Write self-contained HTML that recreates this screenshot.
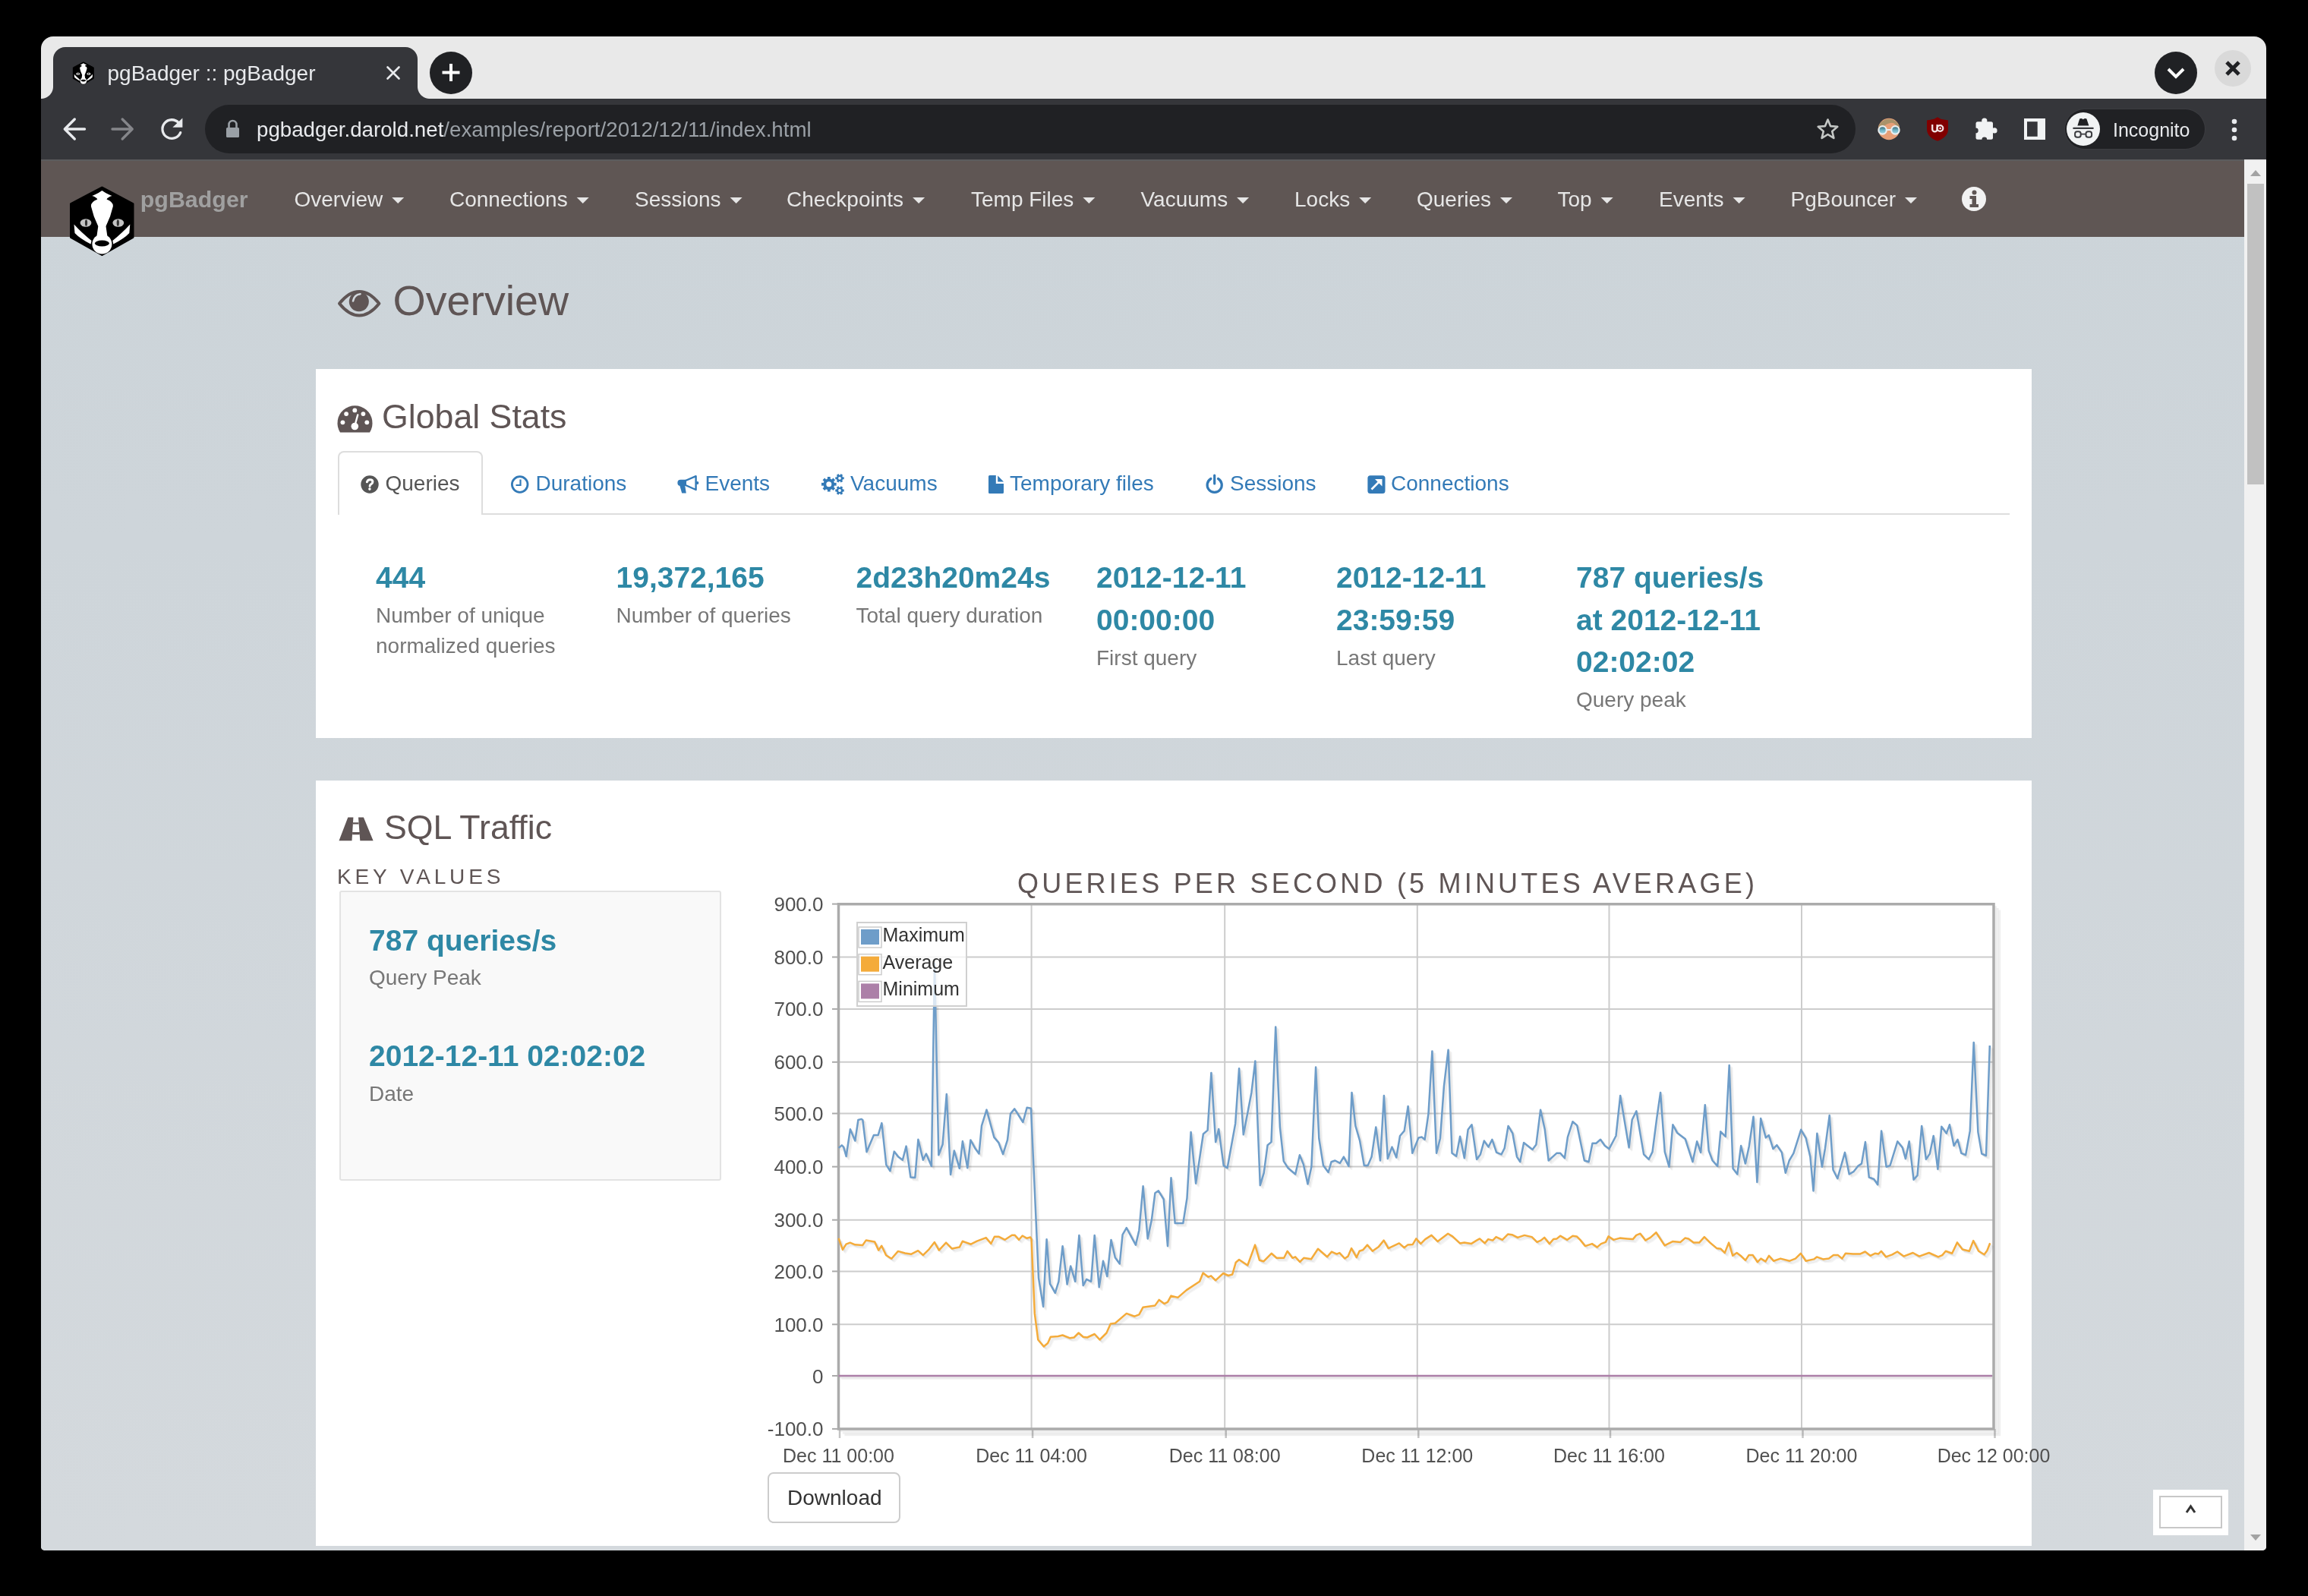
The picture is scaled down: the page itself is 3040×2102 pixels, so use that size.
<!DOCTYPE html>
<html><head><meta charset="utf-8"><title>pgBadger :: pgBadger</title>
<style>
html,body{margin:0;padding:0;width:3040px;height:2102px;overflow:hidden;background:#000;}
body{position:relative;will-change:transform;font-family:"Liberation Sans",sans-serif;}
.a{position:absolute;}
.t{position:absolute;white-space:nowrap;line-height:1;}
svg text{font-family:"Liberation Sans",sans-serif;}
</style></head><body>
<div class="a" id="win" style="left:54px;top:48px;width:2931px;height:1994px;border-radius:16px 16px 5px 5px;overflow:hidden;background:#e9e9e9"><div class="a" style="left:-54px;top:-48px;width:3040px;height:2102px">
<div class="a" style="left:54px;top:130px;width:2931px;height:80px;background:#35363a"></div>
<div class="a" style="left:70px;top:62px;width:480px;height:69px;background:#35363a;border-radius:16px 16px 0 0"></div>
<div class="a" style="left:54px;top:114px;width:16px;height:16px;background:radial-gradient(circle at 0 0,#e9e9e9 15.5px,#35363a 16.5px)"></div>
<div class="a" style="left:550px;top:114px;width:16px;height:16px;background:radial-gradient(circle at 100% 0,#e9e9e9 15.5px,#35363a 16.5px)"></div>
<div class="t" style="top:83px;font-size:28px;color:#e8eaed;left:141.5px;">pgBadger :: pgBadger</div>
<div class="a" style="left:270px;top:138px;width:2174px;height:64px;background:#202124;border-radius:32px"></div>
<div class="t" style="top:156.5px;font-size:27.7px;color:#e8eaed;left:338px;">pgbadger.darold.net<span style="color:#9aa0a6">/examples/report/2012/12/11/index.html</span></div>
<div class="a" style="left:2720px;top:144px;width:184px;height:52px;background:#202124;border-radius:26px;box-shadow:0 0 0 1px #3c3d41"></div>
<div class="a" style="left:2722px;top:148px;width:44px;height:44px;background:#f1f3f4;border-radius:50%"></div>
<div class="t" style="top:159px;font-size:25px;color:#e8eaed;left:2783px;">Incognito</div>
<div class="a" style="left:2838px;top:68px;width:56px;height:56px;background:#202124;border-radius:50%"></div>
<div class="a" style="left:2917px;top:66px;width:48px;height:48px;background:#d9d9d9;border-radius:50%"></div>
<div class="a" style="left:566px;top:68px;width:56px;height:56px;background:#202124;border-radius:50%"></div>
<div class="a" style="left:54px;top:210px;width:2902px;height:1832px;background:linear-gradient(180deg,#ccd4d9 0px,#ced5da 500px,#d4d9dd 1832px)"></div>
<div class="a" style="left:54px;top:210px;width:2902px;height:2px;background:#5c5c5e"></div>
<div class="a" style="left:54px;top:212px;width:2902px;height:100px;background:#5f5654"></div>
<div class="a" style="left:2956px;top:212px;width:29px;height:1830px;background:#f1f1f1"></div>
<div class="a" style="left:2960px;top:242px;width:22px;height:396px;background:#c1c1c1"></div>
<div class="t" style="top:247px;font-size:30.4px;color:#a0a0a0;font-weight:700;left:184.8px;">pgBadger</div>
<div class="t" style="top:249px;font-size:28px;color:#e6e6e6;left:387.5px;">Overview</div>
<div class="t" style="top:249px;font-size:28px;color:#e6e6e6;left:592px;">Connections</div>
<div class="t" style="top:249px;font-size:28px;color:#e6e6e6;left:836px;">Sessions</div>
<div class="t" style="top:249px;font-size:28px;color:#e6e6e6;left:1036px;">Checkpoints</div>
<div class="t" style="top:249px;font-size:28px;color:#e6e6e6;left:1279px;">Temp Files</div>
<div class="t" style="top:249px;font-size:28px;color:#e6e6e6;left:1502.5px;">Vacuums</div>
<div class="t" style="top:249px;font-size:28px;color:#e6e6e6;left:1705px;">Locks</div>
<div class="t" style="top:249px;font-size:28px;color:#e6e6e6;left:1866px;">Queries</div>
<div class="t" style="top:249px;font-size:28px;color:#e6e6e6;left:2051.5px;">Top</div>
<div class="t" style="top:249px;font-size:28px;color:#e6e6e6;left:2185px;">Events</div>
<div class="t" style="top:249px;font-size:28px;color:#e6e6e6;left:2358.5px;">PgBouncer</div>
<div class="t" style="top:369px;font-size:55.6px;color:#5f5555;left:517.5px;">Overview</div>
<div class="a" style="left:416px;top:486px;width:2260px;height:486px;background:#fff"></div>
<div class="t" style="top:527px;font-size:44.7px;color:#5f5555;left:503px;">Global Stats</div>
<div class="a" style="left:445px;top:676px;width:2202px;height:2px;background:#dddddd"></div>
<div class="a" style="left:445px;top:594px;width:191px;height:84px;background:#fff;border:2px solid #dddddd;border-bottom:none;border-radius:8px 8px 0 0;box-sizing:border-box"></div>
<div class="t" style="top:623px;font-size:28px;color:#555555;left:507.5px;">Queries</div>
<div class="t" style="top:623px;font-size:28px;color:#337ab7;left:705.5px;">Durations</div>
<div class="t" style="top:623px;font-size:28px;color:#337ab7;left:928.5px;">Events</div>
<div class="t" style="top:623px;font-size:28px;color:#337ab7;left:1120px;">Vacuums</div>
<div class="t" style="top:623px;font-size:28px;color:#337ab7;left:1330px;">Temporary files</div>
<div class="t" style="top:623px;font-size:28px;color:#337ab7;left:1620px;">Sessions</div>
<div class="t" style="top:623px;font-size:28px;color:#337ab7;left:1832px;">Connections</div>
<div class="t" style="top:741px;font-size:39px;color:#2e88a5;font-weight:700;left:495px;">444</div>
<div class="t" style="top:797.0px;font-size:28px;color:#777777;left:495px;">Number of unique</div>
<div class="t" style="top:837.0px;font-size:28px;color:#777777;left:495px;">normalized queries</div>
<div class="t" style="top:741px;font-size:39px;color:#2e88a5;font-weight:700;left:811.5px;">19,372,165</div>
<div class="t" style="top:797.0px;font-size:28px;color:#777777;left:811.5px;">Number of queries</div>
<div class="t" style="top:741px;font-size:39px;color:#2e88a5;font-weight:700;left:1127.5px;">2d23h20m24s</div>
<div class="t" style="top:797.0px;font-size:28px;color:#777777;left:1127.5px;">Total query duration</div>
<div class="t" style="top:741px;font-size:39px;color:#2e88a5;font-weight:700;left:1444px;">2012-12-11</div>
<div class="t" style="top:796.7px;font-size:39px;color:#2e88a5;font-weight:700;left:1444px;">00:00:00</div>
<div class="t" style="top:852.7px;font-size:28px;color:#777777;left:1444px;">First query</div>
<div class="t" style="top:741px;font-size:39px;color:#2e88a5;font-weight:700;left:1760px;">2012-12-11</div>
<div class="t" style="top:796.7px;font-size:39px;color:#2e88a5;font-weight:700;left:1760px;">23:59:59</div>
<div class="t" style="top:852.7px;font-size:28px;color:#777777;left:1760px;">Last query</div>
<div class="t" style="top:741px;font-size:39px;color:#2e88a5;font-weight:700;left:2076px;">787 queries/s</div>
<div class="t" style="top:796.7px;font-size:39px;color:#2e88a5;font-weight:700;left:2076px;">at 2012-12-11</div>
<div class="t" style="top:852.4000000000001px;font-size:39px;color:#2e88a5;font-weight:700;left:2076px;">02:02:02</div>
<div class="t" style="top:908.4px;font-size:28px;color:#777777;left:2076px;">Query peak</div>
<div class="a" style="left:416px;top:1028px;width:2260px;height:1008px;background:#fff"></div>
<div class="t" style="top:1068px;font-size:44.7px;color:#5f5555;left:506px;">SQL Traffic</div>
<div class="t" style="top:1141px;font-size:28px;color:#5f5555;letter-spacing:4.85px;left:444px;">KEY VALUES</div>
<div class="a" style="left:446.5px;top:1172.5px;width:503.0px;height:382.5px;background:#f9f9f9;border:2px solid #e3e3e3;box-sizing:border-box;border-radius:3px"></div>
<div class="t" style="top:1219px;font-size:39px;color:#2e88a5;font-weight:700;left:486px;">787 queries/s</div>
<div class="t" style="top:1274px;font-size:28px;color:#777777;left:486px;">Query Peak</div>
<div class="t" style="top:1371px;font-size:39px;color:#2e88a5;font-weight:700;left:486px;">2012-12-11 02:02:02</div>
<div class="t" style="top:1426.5px;font-size:28px;color:#777777;left:486px;">Date</div>
<div class="a" style="left:1011px;top:1939px;width:175px;height:67px;background:#fff;border:2px solid #cccccc;border-radius:8px;box-sizing:border-box"></div>
<div class="t" style="top:1959px;font-size:28px;color:#333333;left:1037px;">Download</div>
<div class="a" style="left:2836px;top:1962px;width:99px;height:60px;background:#fff"></div>
<div class="a" style="left:2844px;top:1970px;width:83px;height:43px;background:#fff;border:2px solid #c8c8c8;box-sizing:border-box"></div>
<svg class="a" style="left:0;top:0" width="3040" height="2102" viewBox="0 0 3040 2102">
<line x1="1096" y1="1881.90" x2="1104.5" y2="1881.90" stroke="#aaaaaa" stroke-width="2"/>
<line x1="1104.5" y1="1812.00" x2="2626" y2="1812.00" stroke="#cccccc" stroke-width="2"/>
<line x1="1096" y1="1812.00" x2="1104.5" y2="1812.00" stroke="#aaaaaa" stroke-width="2"/>
<line x1="1104.5" y1="1744.30" x2="2626" y2="1744.30" stroke="#cccccc" stroke-width="2"/>
<line x1="1096" y1="1744.30" x2="1104.5" y2="1744.30" stroke="#aaaaaa" stroke-width="2"/>
<line x1="1104.5" y1="1674.40" x2="2626" y2="1674.40" stroke="#cccccc" stroke-width="2"/>
<line x1="1096" y1="1674.40" x2="1104.5" y2="1674.40" stroke="#aaaaaa" stroke-width="2"/>
<line x1="1104.5" y1="1606.70" x2="2626" y2="1606.70" stroke="#cccccc" stroke-width="2"/>
<line x1="1096" y1="1606.70" x2="1104.5" y2="1606.70" stroke="#aaaaaa" stroke-width="2"/>
<line x1="1104.5" y1="1536.60" x2="2626" y2="1536.60" stroke="#cccccc" stroke-width="2"/>
<line x1="1096" y1="1536.60" x2="1104.5" y2="1536.60" stroke="#aaaaaa" stroke-width="2"/>
<line x1="1104.5" y1="1466.50" x2="2626" y2="1466.50" stroke="#cccccc" stroke-width="2"/>
<line x1="1096" y1="1466.50" x2="1104.5" y2="1466.50" stroke="#aaaaaa" stroke-width="2"/>
<line x1="1104.5" y1="1398.80" x2="2626" y2="1398.80" stroke="#cccccc" stroke-width="2"/>
<line x1="1096" y1="1398.80" x2="1104.5" y2="1398.80" stroke="#aaaaaa" stroke-width="2"/>
<line x1="1104.5" y1="1328.90" x2="2626" y2="1328.90" stroke="#cccccc" stroke-width="2"/>
<line x1="1096" y1="1328.90" x2="1104.5" y2="1328.90" stroke="#aaaaaa" stroke-width="2"/>
<line x1="1104.5" y1="1260.50" x2="2626" y2="1260.50" stroke="#cccccc" stroke-width="2"/>
<line x1="1096" y1="1260.50" x2="1104.5" y2="1260.50" stroke="#aaaaaa" stroke-width="2"/>
<line x1="1096" y1="1190.60" x2="1104.5" y2="1190.60" stroke="#aaaaaa" stroke-width="2"/>
<line x1="1358.60" y1="1190.75" x2="1358.60" y2="1882" stroke="#cccccc" stroke-width="2"/>
<line x1="1613.20" y1="1190.75" x2="1613.20" y2="1882" stroke="#cccccc" stroke-width="2"/>
<line x1="1866.80" y1="1190.75" x2="1866.80" y2="1882" stroke="#cccccc" stroke-width="2"/>
<line x1="2119.50" y1="1190.75" x2="2119.50" y2="1882" stroke="#cccccc" stroke-width="2"/>
<line x1="2373.00" y1="1190.75" x2="2373.00" y2="1882" stroke="#cccccc" stroke-width="2"/>
<line x1="1106.00" y1="1882" x2="1106.00" y2="1894" stroke="#c4c4c4" stroke-width="2.5"/>
<line x1="1360.10" y1="1882" x2="1360.10" y2="1894" stroke="#c4c4c4" stroke-width="2.5"/>
<line x1="1614.70" y1="1882" x2="1614.70" y2="1894" stroke="#c4c4c4" stroke-width="2.5"/>
<line x1="1868.30" y1="1882" x2="1868.30" y2="1894" stroke="#c4c4c4" stroke-width="2.5"/>
<line x1="2121.00" y1="1882" x2="2121.00" y2="1894" stroke="#c4c4c4" stroke-width="2.5"/>
<line x1="2374.50" y1="1882" x2="2374.50" y2="1894" stroke="#c4c4c4" stroke-width="2.5"/>
<line x1="2627.50" y1="1882" x2="2627.50" y2="1894" stroke="#c4c4c4" stroke-width="2.5"/>
<path d="M2628.6 1193.35 V1884.6 H1107.1" fill="none" stroke="rgba(0,0,0,0.06)" stroke-width="3"/>
<path d="M2631.2 1195.95 V1887.2 H1109.7" fill="none" stroke="rgba(0,0,0,0.06)" stroke-width="3"/>
<path d="M2633.8 1198.55 V1889.8 H1112.3" fill="none" stroke="rgba(0,0,0,0.06)" stroke-width="3"/>
<rect x="1104.5" y="1190.75" width="1521.5" height="691.25" fill="none" stroke="#ababab" stroke-width="3.5"/>
<path d="M1105.9 1513.1 L1110.0 1509.6 L1112.4 1512.0 L1115.9 1524.3 L1121.1 1488.6 L1127.6 1503.8 L1131.7 1476.3 L1135.8 1475.1 L1137.5 1476.3 L1142.8 1518.4 L1152.1 1496.2 L1158.0 1496.2 L1162.7 1480.4 L1168.5 1535.4 L1173.8 1543.6 L1179.0 1517.8 L1184.3 1524.8 L1190.2 1528.9 L1194.8 1510.8 L1200.7 1551.7 L1206.5 1552.3 L1210.6 1502.0 L1217.1 1528.9 L1221.2 1520.7 L1228.2 1537.1 L1232.2 1270.2 L1237.5 1522.5 L1242.8 1508.5 L1248.1 1442.4 L1253.3 1548.2 L1258.0 1516.7 L1265.0 1540.0 L1269.1 1504.4 L1275.6 1539.5 L1279.7 1502.6 L1286.1 1514.3 L1290.8 1520.7 L1294.3 1483.9 L1300.7 1462.8 L1310.7 1499.1 L1316.5 1506.1 L1322.4 1521.3 L1328.2 1502.6 L1332.3 1468.1 L1337.6 1461.7 L1348.7 1479.2 L1353.9 1459.9 L1359.2 1461.1 L1369.3 1684.6 L1375.3 1722.2 L1379.8 1633.4 L1384.3 1692.1 L1391.1 1704.1 L1395.6 1689.1 L1400.9 1642.5 L1406.9 1692.8 L1411.4 1668.8 L1417.4 1689.1 L1422.7 1628.2 L1427.9 1694.3 L1432.5 1686.1 L1438.5 1689.1 L1443.0 1628.2 L1449.0 1696.6 L1454.3 1662.0 L1459.5 1682.3 L1464.8 1634.2 L1470.0 1657.5 L1476.1 1665.8 L1479.8 1627.4 L1485.1 1618.4 L1497.1 1640.9 L1501.6 1621.4 L1506.9 1563.5 L1512.9 1632.7 L1518.2 1607.9 L1522.7 1572.5 L1527.2 1569.5 L1534.0 1580.8 L1539.2 1642.5 L1543.7 1552.6 L1549.0 1612.4 L1559.5 1612.4 L1564.8 1579.3 L1569.8 1492.3 L1576.3 1559.9 L1586.1 1494.8 L1591.8 1489.9 L1596.7 1414.1 L1602.4 1505.3 L1606.5 1488.2 L1613.0 1536.3 L1617.9 1539.6 L1628.5 1480.9 L1633.4 1408.4 L1639.1 1495.6 L1649.6 1440.2 L1654.5 1398.6 L1661.1 1562.4 L1665.9 1546.1 L1670.8 1509.4 L1675.7 1505.3 L1681.4 1353.8 L1687.1 1485.8 L1692.0 1530.6 L1697.7 1539.6 L1707.5 1547.7 L1713.2 1522.5 L1718.1 1534.7 L1723.8 1560.7 L1728.7 1537.9 L1734.4 1406.8 L1738.6 1500.5 L1744.3 1536.3 L1750.8 1545.3 L1754.9 1531.4 L1759.8 1529.8 L1766.3 1533.0 L1771.2 1524.9 L1777.7 1537.1 L1781.8 1440.2 L1786.6 1484.2 L1792.3 1503.7 L1798.0 1536.3 L1802.9 1536.3 L1807.8 1524.9 L1813.5 1485.8 L1819.2 1529.8 L1824.1 1444.3 L1829.0 1527.3 L1834.7 1511.9 L1840.4 1525.7 L1845.3 1497.2 L1851.0 1490.7 L1855.9 1458.1 L1861.6 1520.0 L1869.7 1499.6 L1873.8 1498.8 L1877.9 1502.1 L1882.8 1467.9 L1887.7 1385.6 L1893.4 1520.0 L1898.2 1500.5 L1903.1 1432.0 L1908.8 1384.0 L1913.7 1520.0 L1919.4 1524.1 L1924.3 1498.0 L1930.0 1526.5 L1934.9 1489.1 L1939.8 1482.5 L1946.3 1528.2 L1951.2 1521.6 L1956.1 1503.7 L1961.8 1511.9 L1966.7 1502.1 L1972.4 1519.2 L1978.9 1521.6 L1983.0 1513.5 L1987.8 1484.2 L1993.6 1493.9 L1999.3 1524.9 L2003.5 1531.4 L2008.4 1506.2 L2019.8 1515.1 L2024.6 1508.6 L2030.4 1463.0 L2036.1 1489.1 L2040.9 1529.8 L2051.5 1520.0 L2056.4 1520.0 L2062.1 1526.5 L2066.2 1498.8 L2072.7 1478.5 L2078.4 1483.4 L2088.2 1529.8 L2093.9 1531.4 L2098.8 1507.0 L2103.7 1507.0 L2109.4 1502.1 L2115.1 1510.2 L2120.8 1514.3 L2129.7 1497.2 L2135.4 1444.3 L2146.8 1512.7 L2150.9 1476.0 L2156.6 1464.6 L2166.4 1521.6 L2172.9 1528.2 L2177.8 1518.4 L2183.5 1474.4 L2188.4 1440.2 L2194.1 1518.4 L2199.8 1537.9 L2204.7 1482.5 L2210.4 1493.1 L2221.0 1501.3 L2230.7 1531.4 L2236.4 1504.5 L2241.3 1519.2 L2247.0 1456.5 L2251.9 1516.8 L2256.8 1529.8 L2263.5 1537.1 L2267.5 1491.5 L2274.1 1498.0 L2278.9 1404.3 L2283.8 1540.4 L2289.5 1547.7 L2294.4 1510.2 L2300.1 1533.9 L2305.0 1511.1 L2310.7 1472.0 L2315.6 1558.3 L2320.5 1474.4 L2327.0 1499.6 L2331.1 1496.4 L2336.8 1514.3 L2341.7 1509.4 L2348.2 1519.2 L2353.1 1546.1 L2358.0 1529.8 L2363.7 1520.0 L2373.4 1489.1 L2380.0 1500.5 L2385.7 1524.9 L2389.7 1569.7 L2394.6 1493.9 L2401.1 1537.9 L2405.2 1513.5 L2410.9 1470.3 L2415.8 1542.0 L2421.5 1553.4 L2431.3 1519.2 L2437.0 1547.7 L2442.7 1544.4 L2448.4 1537.1 L2453.3 1533.9 L2458.2 1505.3 L2463.0 1551.8 L2469.6 1554.2 L2474.4 1561.6 L2479.3 1490.7 L2485.9 1537.9 L2490.7 1536.3 L2500.5 1504.5 L2507.0 1512.7 L2511.1 1527.3 L2516.0 1504.5 L2521.9 1555.0 L2526.8 1549.3 L2532.5 1484.2 L2538.2 1528.2 L2543.1 1520.8 L2548.0 1497.2 L2553.7 1541.2 L2558.6 1485.0 L2565.1 1493.9 L2569.1 1482.5 L2574.8 1510.2 L2579.7 1502.1 L2584.6 1520.0 L2590.3 1522.5 L2596.0 1490.7 L2600.9 1374.2 L2606.6 1492.3 L2611.5 1520.8 L2617.2 1523.3 L2622.1 1378.3" fill="none" stroke="rgba(0,0,0,0.045)" stroke-width="2.5" stroke-linejoin="round"/>
<path d="M1107.2 1514.4 L1111.3 1510.9 L1113.6 1513.2 L1117.1 1525.5 L1122.4 1489.8 L1128.8 1505.0 L1132.9 1477.5 L1137.0 1476.4 L1138.8 1477.5 L1144.0 1519.7 L1153.4 1497.4 L1159.2 1497.4 L1163.9 1481.6 L1169.8 1536.6 L1175.0 1544.8 L1180.3 1519.1 L1185.6 1526.1 L1191.4 1530.2 L1196.1 1512.1 L1201.9 1553.0 L1207.8 1553.6 L1211.9 1503.3 L1218.3 1530.2 L1222.4 1522.0 L1229.4 1538.4 L1233.5 1271.5 L1238.8 1523.7 L1244.1 1509.7 L1249.3 1443.6 L1254.6 1549.5 L1259.3 1517.9 L1266.3 1541.3 L1270.4 1505.6 L1276.8 1540.7 L1280.9 1503.9 L1287.3 1515.6 L1292.0 1522.0 L1295.5 1485.1 L1302.0 1464.1 L1311.9 1500.4 L1317.8 1507.4 L1323.6 1522.6 L1329.5 1503.9 L1333.5 1469.4 L1338.8 1462.9 L1349.9 1480.5 L1355.2 1461.2 L1360.5 1462.3 L1370.5 1685.8 L1376.6 1723.4 L1381.1 1634.7 L1385.6 1693.3 L1392.3 1705.4 L1396.9 1690.3 L1402.1 1643.7 L1408.1 1694.1 L1412.7 1670.0 L1418.7 1690.3 L1423.9 1629.4 L1429.2 1695.6 L1433.7 1687.3 L1439.7 1690.3 L1444.2 1629.4 L1450.2 1697.8 L1455.5 1663.3 L1460.8 1683.6 L1466.0 1635.4 L1471.3 1658.7 L1477.3 1667.0 L1481.1 1628.7 L1486.3 1619.6 L1498.4 1642.2 L1502.9 1622.7 L1508.1 1564.8 L1514.2 1633.9 L1519.4 1609.1 L1523.9 1573.8 L1528.4 1570.8 L1535.2 1582.0 L1540.5 1643.7 L1545.0 1553.8 L1550.2 1613.6 L1560.8 1613.6 L1566.0 1580.5 L1571.1 1493.6 L1577.6 1561.2 L1587.4 1496.0 L1593.1 1491.1 L1597.9 1415.4 L1603.7 1506.6 L1607.7 1489.5 L1614.2 1537.6 L1619.1 1540.8 L1629.7 1482.2 L1634.6 1409.7 L1640.3 1496.8 L1650.9 1441.4 L1655.8 1399.9 L1662.3 1563.6 L1667.2 1547.3 L1672.1 1510.7 L1677.0 1506.6 L1682.7 1355.1 L1688.4 1487.0 L1693.3 1531.9 L1699.0 1540.8 L1708.7 1549.0 L1714.4 1523.7 L1719.3 1535.9 L1725.0 1562.0 L1729.9 1539.2 L1735.6 1408.0 L1739.8 1501.7 L1745.5 1537.6 L1752.1 1546.5 L1756.1 1532.7 L1761.0 1531.0 L1767.5 1534.3 L1772.4 1526.1 L1778.9 1538.4 L1783.0 1441.4 L1787.9 1485.4 L1793.6 1505.0 L1799.3 1537.6 L1804.2 1537.6 L1809.1 1526.1 L1814.8 1487.0 L1820.5 1531.0 L1825.4 1445.5 L1830.3 1528.6 L1836.0 1513.1 L1841.7 1527.0 L1846.5 1498.5 L1852.2 1491.9 L1857.1 1459.4 L1862.8 1521.3 L1871.0 1500.9 L1875.1 1500.1 L1879.1 1503.3 L1884.0 1469.1 L1888.9 1386.9 L1894.6 1521.3 L1899.5 1501.7 L1904.4 1433.3 L1910.1 1385.2 L1915.0 1521.3 L1920.7 1525.3 L1925.6 1499.3 L1931.3 1527.8 L1936.1 1490.3 L1941.0 1483.8 L1947.6 1529.4 L1952.4 1522.9 L1957.3 1505.0 L1963.0 1513.1 L1967.9 1503.3 L1973.6 1520.4 L1980.1 1522.9 L1984.2 1514.7 L1989.1 1485.4 L1994.8 1495.2 L2000.5 1526.1 L2004.7 1532.7 L2009.6 1507.4 L2021.0 1516.4 L2025.9 1509.9 L2031.6 1464.2 L2037.3 1490.3 L2042.2 1531.0 L2052.8 1521.3 L2057.7 1521.3 L2063.4 1527.8 L2067.4 1500.1 L2074.0 1479.7 L2079.7 1484.6 L2089.4 1531.0 L2095.1 1532.7 L2100.0 1508.2 L2104.9 1508.2 L2110.6 1503.3 L2116.3 1511.5 L2122.0 1515.6 L2131.0 1498.5 L2136.7 1445.5 L2148.1 1513.9 L2152.2 1477.3 L2157.9 1465.9 L2167.6 1522.9 L2174.2 1529.4 L2179.0 1519.6 L2184.7 1475.6 L2189.6 1441.4 L2195.3 1519.6 L2201.0 1539.2 L2205.9 1483.8 L2211.6 1494.4 L2222.2 1502.5 L2232.0 1532.7 L2237.7 1505.8 L2242.6 1520.4 L2248.3 1457.7 L2253.2 1518.0 L2258.1 1531.0 L2264.7 1538.4 L2268.8 1492.8 L2275.3 1499.3 L2280.2 1405.6 L2285.1 1541.6 L2290.8 1549.0 L2295.7 1511.5 L2301.4 1535.1 L2306.3 1512.3 L2312.0 1473.2 L2316.9 1559.5 L2321.7 1475.6 L2328.3 1500.9 L2332.3 1497.6 L2338.0 1515.6 L2342.9 1510.7 L2349.4 1520.4 L2354.3 1547.3 L2359.2 1531.0 L2364.9 1521.3 L2374.7 1490.3 L2381.2 1501.7 L2386.9 1526.1 L2391.0 1571.0 L2395.9 1495.2 L2402.4 1539.2 L2406.5 1514.7 L2412.2 1471.6 L2417.0 1543.3 L2422.8 1554.7 L2432.5 1520.4 L2438.2 1549.0 L2443.9 1545.7 L2449.6 1538.4 L2454.5 1535.1 L2459.4 1506.6 L2464.3 1553.0 L2470.8 1555.5 L2475.7 1562.8 L2480.6 1491.9 L2487.1 1539.2 L2492.0 1537.6 L2501.8 1505.8 L2508.3 1513.9 L2512.4 1528.6 L2517.2 1505.8 L2523.1 1556.3 L2528.0 1550.6 L2533.7 1485.4 L2539.4 1529.4 L2544.3 1522.1 L2549.2 1498.5 L2554.9 1542.4 L2559.8 1486.2 L2566.3 1495.2 L2570.4 1483.8 L2576.1 1511.5 L2581.0 1503.3 L2585.9 1521.3 L2591.6 1523.7 L2597.3 1491.9 L2602.2 1375.4 L2607.9 1493.6 L2612.8 1522.1 L2618.5 1524.5 L2623.3 1379.5" fill="none" stroke="rgba(0,0,0,0.045)" stroke-width="2.5" stroke-linejoin="round"/>
<path d="M1108.4 1515.6 L1112.5 1512.1 L1114.9 1514.5 L1118.4 1526.8 L1123.6 1491.1 L1130.1 1506.3 L1134.2 1478.8 L1138.3 1477.6 L1140.0 1478.8 L1145.3 1520.9 L1154.6 1498.7 L1160.5 1498.7 L1165.2 1482.9 L1171.0 1537.9 L1176.3 1546.1 L1181.5 1520.3 L1186.8 1527.3 L1192.7 1531.4 L1197.3 1513.3 L1203.2 1554.2 L1209.0 1554.8 L1213.1 1504.5 L1219.6 1531.4 L1223.7 1523.2 L1230.7 1539.6 L1234.8 1272.8 L1240.0 1525.0 L1245.3 1511.0 L1250.6 1444.9 L1255.8 1550.7 L1260.5 1519.2 L1267.5 1542.5 L1271.6 1506.9 L1278.1 1542.0 L1282.2 1505.1 L1288.6 1516.8 L1293.3 1523.2 L1296.8 1486.4 L1303.2 1465.3 L1313.2 1501.6 L1319.0 1508.6 L1324.9 1523.8 L1330.7 1505.1 L1334.8 1470.6 L1340.1 1464.2 L1351.2 1481.7 L1356.4 1462.4 L1361.7 1463.6 L1371.8 1687.1 L1377.8 1724.7 L1382.3 1635.9 L1386.8 1694.6 L1393.6 1706.6 L1398.1 1691.6 L1403.4 1645.0 L1409.4 1695.3 L1413.9 1671.3 L1419.9 1691.6 L1425.2 1630.7 L1430.4 1696.8 L1435.0 1688.6 L1441.0 1691.6 L1445.5 1630.7 L1451.5 1699.1 L1456.8 1664.5 L1462.0 1684.8 L1467.3 1636.7 L1472.5 1660.0 L1478.6 1668.3 L1482.3 1629.9 L1487.6 1620.9 L1499.6 1643.4 L1504.1 1623.9 L1509.4 1566.0 L1515.4 1635.2 L1520.7 1610.4 L1525.2 1575.0 L1529.7 1572.0 L1536.5 1583.3 L1541.7 1645.0 L1546.2 1555.1 L1551.5 1614.9 L1562.0 1614.9 L1567.3 1581.8 L1572.3 1494.8 L1578.8 1562.4 L1588.6 1497.3 L1594.3 1492.4 L1599.2 1416.6 L1604.9 1507.8 L1609.0 1490.7 L1615.5 1538.8 L1620.4 1542.1 L1631.0 1483.4 L1635.9 1410.9 L1641.6 1498.1 L1652.1 1442.7 L1657.0 1401.1 L1663.6 1564.9 L1668.4 1548.6 L1673.3 1511.9 L1678.2 1507.8 L1683.9 1356.3 L1689.6 1488.3 L1694.5 1533.1 L1700.2 1542.1 L1710.0 1550.2 L1715.7 1525.0 L1720.6 1537.2 L1726.3 1563.2 L1731.2 1540.4 L1736.9 1409.3 L1741.1 1503.0 L1746.8 1538.8 L1753.3 1547.8 L1757.4 1533.9 L1762.3 1532.3 L1768.8 1535.5 L1773.7 1527.4 L1780.2 1539.6 L1784.3 1442.7 L1789.1 1486.7 L1794.8 1506.2 L1800.5 1538.8 L1805.4 1538.8 L1810.3 1527.4 L1816.0 1488.3 L1821.7 1532.3 L1826.6 1446.8 L1831.5 1529.8 L1837.2 1514.4 L1842.9 1528.2 L1847.8 1499.7 L1853.5 1493.2 L1858.4 1460.6 L1864.1 1522.5 L1872.2 1502.1 L1876.3 1501.3 L1880.4 1504.6 L1885.3 1470.4 L1890.2 1388.1 L1895.9 1522.5 L1900.7 1503.0 L1905.6 1434.5 L1911.3 1386.5 L1916.2 1522.5 L1921.9 1526.6 L1926.8 1500.5 L1932.5 1529.0 L1937.4 1491.6 L1942.3 1485.0 L1948.8 1530.7 L1953.7 1524.1 L1958.6 1506.2 L1964.3 1514.4 L1969.2 1504.6 L1974.9 1521.7 L1981.4 1524.1 L1985.5 1516.0 L1990.3 1486.7 L1996.1 1496.4 L2001.8 1527.4 L2006.0 1533.9 L2010.9 1508.7 L2022.3 1517.6 L2027.1 1511.1 L2032.9 1465.5 L2038.6 1491.6 L2043.4 1532.3 L2054.0 1522.5 L2058.9 1522.5 L2064.6 1529.0 L2068.7 1501.3 L2075.2 1481.0 L2080.9 1485.9 L2090.7 1532.3 L2096.4 1533.9 L2101.3 1509.5 L2106.2 1509.5 L2111.9 1504.6 L2117.6 1512.7 L2123.3 1516.8 L2132.2 1499.7 L2137.9 1446.8 L2149.3 1515.2 L2153.4 1478.5 L2159.1 1467.1 L2168.9 1524.1 L2175.4 1530.7 L2180.3 1520.9 L2186.0 1476.9 L2190.9 1442.7 L2196.6 1520.9 L2202.3 1540.4 L2207.2 1485.0 L2212.9 1495.6 L2223.5 1503.8 L2233.2 1533.9 L2238.9 1507.0 L2243.8 1521.7 L2249.5 1459.0 L2254.4 1519.3 L2259.3 1532.3 L2266.0 1539.6 L2270.0 1494.0 L2276.6 1500.5 L2281.4 1406.8 L2286.3 1542.9 L2292.0 1550.2 L2296.9 1512.7 L2302.6 1536.4 L2307.5 1513.6 L2313.2 1474.5 L2318.1 1560.8 L2323.0 1476.9 L2329.5 1502.1 L2333.6 1498.9 L2339.3 1516.8 L2344.2 1511.9 L2350.7 1521.7 L2355.6 1548.6 L2360.5 1532.3 L2366.2 1522.5 L2375.9 1491.6 L2382.5 1503.0 L2388.2 1527.4 L2392.2 1572.2 L2397.1 1496.4 L2403.6 1540.4 L2407.7 1516.0 L2413.4 1472.8 L2418.3 1544.5 L2424.0 1555.9 L2433.8 1521.7 L2439.5 1550.2 L2445.2 1546.9 L2450.9 1539.6 L2455.8 1536.4 L2460.7 1507.8 L2465.5 1554.3 L2472.1 1556.7 L2476.9 1564.1 L2481.8 1493.2 L2488.4 1540.4 L2493.2 1538.8 L2503.0 1507.0 L2509.5 1515.2 L2513.6 1529.8 L2518.5 1507.0 L2524.4 1557.5 L2529.3 1551.8 L2535.0 1486.7 L2540.7 1530.7 L2545.6 1523.3 L2550.5 1499.7 L2556.2 1543.7 L2561.1 1487.5 L2567.6 1496.4 L2571.6 1485.0 L2577.3 1512.7 L2582.2 1504.6 L2587.1 1522.5 L2592.8 1525.0 L2598.5 1493.2 L2603.4 1376.7 L2609.1 1494.8 L2614.0 1523.3 L2619.7 1525.8 L2624.6 1380.8" fill="none" stroke="rgba(0,0,0,0.045)" stroke-width="2.5" stroke-linejoin="round"/>
<path d="M1104.7 1511.9 L1108.8 1508.4 L1111.1 1510.7 L1114.6 1523.0 L1119.9 1487.3 L1126.3 1502.5 L1130.4 1475.0 L1134.5 1473.9 L1136.3 1475.0 L1141.5 1517.2 L1150.9 1494.9 L1156.7 1494.9 L1161.4 1479.1 L1167.3 1534.1 L1172.5 1542.3 L1177.8 1516.6 L1183.1 1523.6 L1188.9 1527.7 L1193.6 1509.6 L1199.4 1550.5 L1205.3 1551.1 L1209.4 1500.8 L1215.8 1527.7 L1219.9 1519.5 L1226.9 1535.9 L1231.0 1269.0 L1236.3 1521.2 L1241.6 1507.2 L1246.8 1441.1 L1252.1 1547.0 L1256.8 1515.4 L1263.8 1538.8 L1267.9 1503.1 L1274.3 1538.2 L1278.4 1501.4 L1284.8 1513.1 L1289.5 1519.5 L1293.0 1482.6 L1299.5 1461.6 L1309.4 1497.9 L1315.3 1504.9 L1321.1 1520.1 L1327.0 1501.4 L1331.0 1466.9 L1336.3 1460.4 L1347.4 1478.0 L1352.7 1458.7 L1358.0 1459.8 L1368.0 1683.3 L1374.1 1720.9 L1378.6 1632.2 L1383.1 1690.8 L1389.8 1702.9 L1394.4 1687.8 L1399.6 1641.2 L1405.6 1691.6 L1410.2 1667.5 L1416.2 1687.8 L1421.4 1626.9 L1426.7 1693.1 L1431.2 1684.8 L1437.2 1687.8 L1441.7 1626.9 L1447.7 1695.3 L1453.0 1660.8 L1458.3 1681.1 L1463.5 1632.9 L1468.8 1656.2 L1474.8 1664.5 L1478.6 1626.2 L1483.8 1617.1 L1495.9 1639.7 L1500.4 1620.2 L1505.6 1562.3 L1511.7 1631.4 L1516.9 1606.6 L1521.4 1571.3 L1525.9 1568.3 L1532.7 1579.5 L1538.0 1641.2 L1542.5 1551.3 L1547.7 1611.1 L1558.3 1611.1 L1563.5 1578.0 L1568.6 1491.1 L1575.1 1558.7 L1584.9 1493.5 L1590.6 1488.6 L1595.4 1412.9 L1601.2 1504.1 L1605.2 1487.0 L1611.7 1535.1 L1616.6 1538.3 L1627.2 1479.7 L1632.1 1407.2 L1637.8 1494.3 L1648.4 1438.9 L1653.3 1397.4 L1659.8 1561.1 L1664.7 1544.8 L1669.6 1508.2 L1674.5 1504.1 L1680.2 1352.6 L1685.9 1484.5 L1690.8 1529.4 L1696.5 1538.3 L1706.2 1546.5 L1711.9 1521.2 L1716.8 1533.4 L1722.5 1559.5 L1727.4 1536.7 L1733.1 1405.5 L1737.3 1499.2 L1743.0 1535.1 L1749.6 1544.0 L1753.6 1530.2 L1758.5 1528.5 L1765.0 1531.8 L1769.9 1523.6 L1776.4 1535.9 L1780.5 1438.9 L1785.4 1482.9 L1791.1 1502.5 L1796.8 1535.1 L1801.7 1535.1 L1806.6 1523.6 L1812.3 1484.5 L1818.0 1528.5 L1822.9 1443.0 L1827.8 1526.1 L1833.5 1510.6 L1839.2 1524.5 L1844.0 1496.0 L1849.7 1489.4 L1854.6 1456.9 L1860.3 1518.8 L1868.5 1498.4 L1872.6 1497.6 L1876.6 1500.8 L1881.5 1466.6 L1886.4 1384.4 L1892.1 1518.8 L1897.0 1499.2 L1901.9 1430.8 L1907.6 1382.7 L1912.5 1518.8 L1918.2 1522.8 L1923.1 1496.8 L1928.8 1525.3 L1933.6 1487.8 L1938.5 1481.3 L1945.1 1526.9 L1949.9 1520.4 L1954.8 1502.5 L1960.5 1510.6 L1965.4 1500.8 L1971.1 1517.9 L1977.6 1520.4 L1981.7 1512.2 L1986.6 1482.9 L1992.3 1492.7 L1998.0 1523.6 L2002.2 1530.2 L2007.1 1504.9 L2018.5 1513.9 L2023.4 1507.4 L2029.1 1461.7 L2034.8 1487.8 L2039.7 1528.5 L2050.3 1518.8 L2055.2 1518.8 L2060.9 1525.3 L2064.9 1497.6 L2071.5 1477.2 L2077.2 1482.1 L2086.9 1528.5 L2092.6 1530.2 L2097.5 1505.7 L2102.4 1505.7 L2108.1 1500.8 L2113.8 1509.0 L2119.5 1513.1 L2128.5 1496.0 L2134.2 1443.0 L2145.6 1511.4 L2149.7 1474.8 L2155.4 1463.4 L2165.1 1520.4 L2171.7 1526.9 L2176.5 1517.1 L2182.2 1473.1 L2187.1 1438.9 L2192.8 1517.1 L2198.5 1536.7 L2203.4 1481.3 L2209.1 1491.9 L2219.7 1500.0 L2229.5 1530.2 L2235.2 1503.3 L2240.1 1517.9 L2245.8 1455.2 L2250.7 1515.5 L2255.6 1528.5 L2262.2 1535.9 L2266.3 1490.3 L2272.8 1496.8 L2277.7 1403.1 L2282.6 1539.1 L2288.3 1546.5 L2293.2 1509.0 L2298.9 1532.6 L2303.8 1509.8 L2309.5 1470.7 L2314.4 1557.0 L2319.2 1473.1 L2325.8 1498.4 L2329.8 1495.1 L2335.5 1513.1 L2340.4 1508.2 L2346.9 1517.9 L2351.8 1544.8 L2356.7 1528.5 L2362.4 1518.8 L2372.2 1487.8 L2378.7 1499.2 L2384.4 1523.6 L2388.5 1568.5 L2393.4 1492.7 L2399.9 1536.7 L2404.0 1512.2 L2409.7 1469.1 L2414.5 1540.8 L2420.3 1552.2 L2430.0 1517.9 L2435.7 1546.5 L2441.4 1543.2 L2447.1 1535.9 L2452.0 1532.6 L2456.9 1504.1 L2461.8 1550.5 L2468.3 1553.0 L2473.2 1560.3 L2478.1 1489.4 L2484.6 1536.7 L2489.5 1535.1 L2499.3 1503.3 L2505.8 1511.4 L2509.9 1526.1 L2514.7 1503.3 L2520.6 1553.8 L2525.5 1548.1 L2531.2 1482.9 L2536.9 1526.9 L2541.8 1519.6 L2546.7 1496.0 L2552.4 1539.9 L2557.3 1483.7 L2563.8 1492.7 L2567.9 1481.3 L2573.6 1509.0 L2578.5 1500.8 L2583.4 1518.8 L2589.1 1521.2 L2594.8 1489.4 L2599.7 1372.9 L2605.4 1491.1 L2610.3 1519.6 L2616.0 1522.0 L2620.8 1377.0" fill="none" stroke="#6e9dc9" stroke-width="2.5" stroke-linejoin="round"/>
<path d="M1105.9 1632.0 L1111.1 1647.2 L1115.7 1639.9 L1121.0 1638.0 L1127.6 1640.6 L1137.4 1641.2 L1142.0 1634.7 L1153.2 1636.6 L1158.5 1647.8 L1162.4 1641.9 L1168.4 1654.4 L1175.6 1659.0 L1184.1 1649.1 L1193.4 1651.8 L1201.2 1653.1 L1210.5 1648.5 L1217.0 1654.4 L1224.9 1646.5 L1232.2 1637.3 L1238.1 1647.8 L1247.3 1638.0 L1255.2 1645.9 L1265.1 1643.9 L1269.0 1636.0 L1280.2 1639.9 L1288.1 1636.0 L1299.9 1631.4 L1306.5 1639.3 L1311.1 1630.1 L1317.0 1630.1 L1324.9 1634.0 L1334.1 1628.1 L1338.1 1628.1 L1343.4 1634.0 L1348.0 1628.8 L1353.9 1632.0 L1358.5 1630.7 L1359.8 1633.4 L1364.0 1731.2 L1368.5 1765.8 L1376.1 1774.8 L1381.3 1770.3 L1385.1 1762.0 L1394.9 1761.2 L1400.9 1759.7 L1410.6 1763.5 L1415.9 1762.8 L1421.9 1756.7 L1427.9 1762.0 L1433.2 1762.8 L1443.0 1758.2 L1449.7 1765.8 L1458.8 1756.7 L1464.0 1744.7 L1470.0 1744.0 L1485.1 1731.2 L1495.6 1734.9 L1501.6 1732.7 L1506.9 1722.9 L1522.7 1720.6 L1527.9 1713.1 L1534.7 1718.4 L1539.2 1716.1 L1543.7 1707.9 L1552.8 1710.1 L1564.0 1700.3 L1581.3 1689.1 L1585.8 1677.8 L1592.6 1683.1 L1596.4 1681.6 L1602.4 1687.6 L1612.5 1678.2 L1619.2 1681.2 L1624.4 1679.7 L1628.9 1664.0 L1633.4 1660.3 L1644.6 1667.8 L1654.3 1640.9 L1660.3 1661.0 L1665.5 1662.5 L1676.0 1652.1 L1682.7 1658.1 L1692.4 1658.1 L1696.9 1649.1 L1703.6 1658.1 L1707.4 1656.6 L1713.4 1663.3 L1718.6 1658.1 L1728.3 1659.5 L1737.3 1646.1 L1749.2 1656.6 L1755.2 1649.8 L1761.9 1652.8 L1765.7 1651.3 L1772.4 1658.8 L1776.9 1655.8 L1781.4 1645.3 L1788.1 1657.3 L1791.8 1649.1 L1796.3 1647.6 L1802.3 1640.9 L1809.0 1649.1 L1817.2 1643.1 L1824.0 1634.9 L1829.9 1645.3 L1844.1 1638.6 L1850.9 1644.6 L1855.4 1640.9 L1862.1 1640.1 L1866.6 1632.6 L1872.6 1639.4 L1878.5 1633.4 L1886.8 1628.2 L1895.0 1636.4 L1908.4 1625.9 L1914.4 1629.7 L1924.1 1638.6 L1930.1 1637.9 L1939.1 1639.4 L1946.2 1634.9 L1950.2 1632.6 L1956.9 1638.6 L1961.4 1633.4 L1967.4 1634.9 L1971.9 1630.4 L1980.1 1634.1 L1987.6 1626.7 L1992.8 1627.4 L2000.3 1631.1 L2009.3 1628.2 L2019.0 1630.4 L2025.7 1637.1 L2030.9 1634.9 L2035.4 1631.1 L2042.1 1639.4 L2047.4 1633.4 L2051.9 1632.6 L2056.3 1628.9 L2065.3 1634.1 L2072.8 1628.9 L2078.0 1629.7 L2082.5 1634.1 L2089.2 1642.4 L2098.2 1639.4 L2104.9 1643.9 L2110.2 1639.4 L2116.1 1637.1 L2119.9 1629.7 L2126.6 1634.1 L2134.8 1631.9 L2144.5 1632.6 L2152.0 1633.4 L2156.5 1628.2 L2161.7 1625.9 L2168.5 1634.9 L2175.2 1631.1 L2182.7 1624.4 L2193.9 1641.6 L2204.3 1636.4 L2214.8 1637.1 L2220.8 1631.9 L2225.3 1632.6 L2232.0 1637.9 L2239.5 1637.9 L2246.2 1630.4 L2253.7 1637.9 L2262.6 1645.3 L2267.9 1646.1 L2273.1 1651.3 L2278.3 1637.9 L2283.6 1655.1 L2288.8 1651.3 L2294.9 1655.8 L2300.2 1661.2 L2304.8 1654.3 L2310.1 1654.3 L2316.1 1663.4 L2320.7 1658.9 L2326.7 1662.7 L2331.3 1655.1 L2337.4 1661.9 L2346.5 1658.9 L2358.6 1661.9 L2366.2 1658.9 L2373.0 1652.1 L2379.8 1661.9 L2390.4 1659.6 L2394.2 1656.6 L2402.6 1659.6 L2410.2 1658.9 L2416.2 1654.3 L2422.3 1654.3 L2427.6 1658.9 L2432.1 1652.1 L2442.0 1652.8 L2451.1 1652.8 L2457.9 1649.8 L2464.8 1655.1 L2470.8 1652.1 L2475.4 1652.8 L2479.2 1649.0 L2485.2 1656.6 L2493.6 1653.6 L2500.4 1649.8 L2508.7 1655.8 L2520.9 1651.3 L2529.2 1655.8 L2542.1 1651.3 L2554.2 1656.6 L2559.5 1654.3 L2564.1 1649.0 L2572.4 1652.1 L2579.2 1637.6 L2586.1 1646.7 L2595.2 1649.0 L2600.5 1635.4 L2607.3 1649.0 L2614.9 1653.6 L2618.7 1648.3 L2622.5 1638.4" fill="none" stroke="rgba(0,0,0,0.045)" stroke-width="2.5" stroke-linejoin="round"/>
<path d="M1107.1 1633.3 L1112.4 1648.4 L1117.0 1641.2 L1122.2 1639.2 L1128.8 1641.8 L1138.7 1642.5 L1143.3 1635.9 L1154.5 1637.9 L1159.7 1649.1 L1163.7 1643.2 L1169.6 1655.7 L1176.8 1660.3 L1185.4 1650.4 L1194.6 1653.0 L1202.5 1654.3 L1211.7 1649.7 L1218.3 1655.7 L1226.2 1647.8 L1233.4 1638.6 L1239.3 1649.1 L1248.6 1639.2 L1256.4 1647.1 L1266.3 1645.1 L1270.3 1637.2 L1281.4 1641.2 L1289.3 1637.2 L1301.2 1632.6 L1307.8 1640.5 L1312.4 1631.3 L1318.3 1631.3 L1326.2 1635.3 L1335.4 1629.3 L1339.3 1629.3 L1344.6 1635.3 L1349.2 1630.0 L1355.1 1633.3 L1359.7 1632.0 L1361.1 1634.6 L1365.3 1732.4 L1369.8 1767.0 L1377.3 1776.0 L1382.6 1771.5 L1386.3 1763.3 L1396.1 1762.5 L1402.1 1761.0 L1411.9 1764.8 L1417.2 1764.0 L1423.2 1758.0 L1429.2 1763.3 L1434.5 1764.0 L1444.2 1759.5 L1451.0 1767.0 L1460.0 1758.0 L1465.3 1746.0 L1471.3 1745.2 L1486.3 1732.4 L1496.9 1736.2 L1502.9 1733.9 L1508.1 1724.2 L1523.9 1721.9 L1529.2 1714.4 L1536.0 1719.6 L1540.5 1717.4 L1545.0 1709.1 L1554.0 1711.4 L1565.3 1701.6 L1582.6 1690.3 L1587.1 1679.0 L1593.9 1684.3 L1597.6 1682.8 L1603.6 1688.8 L1613.7 1679.5 L1620.4 1682.5 L1625.7 1681.0 L1630.2 1665.3 L1634.6 1661.5 L1645.8 1669.0 L1655.6 1642.1 L1661.5 1662.3 L1666.8 1663.8 L1677.2 1653.3 L1684.0 1659.3 L1693.7 1659.3 L1698.2 1650.3 L1704.9 1659.3 L1708.6 1657.8 L1714.6 1664.5 L1719.8 1659.3 L1729.6 1660.8 L1738.5 1647.3 L1750.5 1657.8 L1756.5 1651.1 L1763.2 1654.1 L1766.9 1652.6 L1773.7 1660.0 L1778.1 1657.1 L1782.6 1646.6 L1789.3 1658.6 L1793.1 1650.3 L1797.6 1648.8 L1803.5 1642.1 L1810.3 1650.3 L1818.5 1644.4 L1825.2 1636.1 L1831.2 1646.6 L1845.4 1639.9 L1852.1 1645.8 L1856.6 1642.1 L1863.3 1641.4 L1867.8 1633.9 L1873.8 1640.6 L1879.8 1634.6 L1888.0 1629.4 L1896.2 1637.6 L1909.7 1627.2 L1915.7 1630.9 L1925.4 1639.9 L1931.3 1639.1 L1940.3 1640.6 L1947.5 1636.1 L1951.5 1633.9 L1958.2 1639.9 L1962.7 1634.6 L1968.7 1636.1 L1973.1 1631.6 L1981.4 1635.4 L1988.8 1627.9 L1994.1 1628.7 L2001.5 1632.4 L2010.5 1629.4 L2020.2 1631.6 L2027.0 1638.4 L2032.2 1636.1 L2036.7 1632.4 L2043.4 1640.6 L2048.6 1634.6 L2053.1 1633.9 L2057.6 1630.2 L2066.6 1635.4 L2074.0 1630.2 L2079.3 1630.9 L2083.8 1635.4 L2090.5 1643.6 L2099.5 1640.6 L2106.2 1645.1 L2111.4 1640.6 L2117.4 1638.4 L2121.1 1630.9 L2127.9 1635.4 L2136.1 1633.1 L2145.8 1633.9 L2153.3 1634.6 L2157.7 1629.4 L2163.0 1627.2 L2169.7 1636.1 L2176.4 1632.4 L2183.9 1625.7 L2195.1 1642.9 L2205.6 1637.6 L2216.0 1638.4 L2222.0 1633.1 L2226.5 1633.9 L2233.2 1639.1 L2240.7 1639.1 L2247.4 1631.6 L2254.9 1639.1 L2263.9 1646.6 L2269.1 1647.3 L2274.3 1652.6 L2279.6 1639.1 L2284.8 1656.3 L2290.1 1652.5 L2296.1 1657.1 L2301.5 1662.4 L2306.0 1655.6 L2311.3 1655.6 L2317.4 1664.7 L2321.9 1660.1 L2328.0 1663.9 L2332.5 1656.3 L2338.6 1663.2 L2347.7 1660.1 L2359.8 1663.2 L2367.4 1660.1 L2374.3 1653.3 L2381.1 1663.2 L2391.7 1660.9 L2395.5 1657.9 L2403.8 1660.9 L2411.4 1660.1 L2417.5 1655.6 L2423.5 1655.6 L2428.8 1660.1 L2433.4 1653.3 L2443.3 1654.1 L2452.4 1654.1 L2459.2 1651.0 L2466.0 1656.3 L2472.1 1653.3 L2476.6 1654.1 L2480.4 1650.3 L2486.5 1657.9 L2494.8 1654.8 L2501.6 1651.0 L2510.0 1657.1 L2522.1 1652.5 L2530.5 1657.1 L2543.3 1652.5 L2555.5 1657.9 L2560.8 1655.6 L2565.3 1650.3 L2573.7 1653.3 L2580.5 1638.9 L2587.3 1648.0 L2596.4 1650.3 L2601.7 1636.6 L2608.6 1650.3 L2616.1 1654.8 L2619.9 1649.5 L2623.7 1639.7" fill="none" stroke="rgba(0,0,0,0.045)" stroke-width="2.5" stroke-linejoin="round"/>
<path d="M1108.4 1634.5 L1113.6 1649.7 L1118.2 1642.4 L1123.5 1640.5 L1130.1 1643.1 L1139.9 1643.8 L1144.5 1637.2 L1155.7 1639.1 L1161.0 1650.3 L1164.9 1644.4 L1170.9 1656.9 L1178.1 1661.5 L1186.6 1651.6 L1195.9 1654.3 L1203.8 1655.6 L1213.0 1651.0 L1219.5 1656.9 L1227.4 1649.0 L1234.7 1639.8 L1240.6 1650.3 L1249.8 1640.5 L1257.7 1648.4 L1267.6 1646.4 L1271.5 1638.5 L1282.7 1642.4 L1290.6 1638.5 L1302.4 1633.9 L1309.0 1641.8 L1313.6 1632.6 L1319.5 1632.6 L1327.4 1636.5 L1336.6 1630.6 L1340.6 1630.6 L1345.9 1636.5 L1350.5 1631.2 L1356.4 1634.5 L1361.0 1633.2 L1362.3 1635.9 L1366.5 1733.7 L1371.0 1768.3 L1378.6 1777.3 L1383.8 1772.8 L1387.6 1764.5 L1397.4 1763.8 L1403.4 1762.2 L1413.1 1766.0 L1418.4 1765.3 L1424.4 1759.2 L1430.4 1764.5 L1435.7 1765.3 L1445.5 1760.7 L1452.2 1768.3 L1461.3 1759.2 L1466.5 1747.2 L1472.5 1746.5 L1487.6 1733.7 L1498.1 1737.4 L1504.1 1735.2 L1509.4 1725.4 L1525.2 1723.1 L1530.4 1715.6 L1537.2 1720.9 L1541.7 1718.6 L1546.2 1710.4 L1555.3 1712.6 L1566.5 1702.8 L1583.8 1691.6 L1588.3 1680.3 L1595.1 1685.6 L1598.9 1684.1 L1604.9 1690.1 L1615.0 1680.7 L1621.7 1683.7 L1626.9 1682.2 L1631.4 1666.5 L1635.9 1662.8 L1647.1 1670.3 L1656.8 1643.4 L1662.8 1663.5 L1668.0 1665.0 L1678.5 1654.6 L1685.2 1660.6 L1694.9 1660.6 L1699.4 1651.6 L1706.1 1660.6 L1709.9 1659.1 L1715.9 1665.8 L1721.1 1660.6 L1730.8 1662.0 L1739.8 1648.6 L1751.7 1659.1 L1757.7 1652.3 L1764.4 1655.3 L1768.2 1653.8 L1774.9 1661.3 L1779.4 1658.3 L1783.9 1647.8 L1790.6 1659.8 L1794.3 1651.6 L1798.8 1650.1 L1804.8 1643.4 L1811.5 1651.6 L1819.7 1645.6 L1826.5 1637.4 L1832.4 1647.8 L1846.6 1641.1 L1853.4 1647.1 L1857.9 1643.4 L1864.6 1642.6 L1869.1 1635.1 L1875.1 1641.9 L1881.0 1635.9 L1889.3 1630.7 L1897.5 1638.9 L1910.9 1628.4 L1916.9 1632.2 L1926.6 1641.1 L1932.6 1640.4 L1941.6 1641.9 L1948.7 1637.4 L1952.7 1635.1 L1959.4 1641.1 L1963.9 1635.9 L1969.9 1637.4 L1974.4 1632.9 L1982.6 1636.6 L1990.1 1629.2 L1995.3 1629.9 L2002.8 1633.6 L2011.8 1630.7 L2021.5 1632.9 L2028.2 1639.6 L2033.4 1637.4 L2037.9 1633.6 L2044.6 1641.9 L2049.9 1635.9 L2054.4 1635.1 L2058.8 1631.4 L2067.8 1636.6 L2075.3 1631.4 L2080.5 1632.2 L2085.0 1636.6 L2091.7 1644.9 L2100.7 1641.9 L2107.4 1646.4 L2112.7 1641.9 L2118.6 1639.6 L2122.4 1632.2 L2129.1 1636.6 L2137.3 1634.4 L2147.0 1635.1 L2154.5 1635.9 L2159.0 1630.7 L2164.2 1628.4 L2171.0 1637.4 L2177.7 1633.6 L2185.2 1626.9 L2196.4 1644.1 L2206.8 1638.9 L2217.3 1639.6 L2223.3 1634.4 L2227.8 1635.1 L2234.5 1640.4 L2242.0 1640.4 L2248.7 1632.9 L2256.2 1640.4 L2265.1 1647.8 L2270.4 1648.6 L2275.6 1653.8 L2280.8 1640.4 L2286.1 1657.6 L2291.3 1653.8 L2297.4 1658.3 L2302.7 1663.7 L2307.3 1656.8 L2312.6 1656.8 L2318.6 1665.9 L2323.2 1661.4 L2329.2 1665.2 L2333.8 1657.6 L2339.9 1664.4 L2349.0 1661.4 L2361.1 1664.4 L2368.7 1661.4 L2375.5 1654.6 L2382.3 1664.4 L2392.9 1662.1 L2396.7 1659.1 L2405.1 1662.1 L2412.7 1661.4 L2418.7 1656.8 L2424.8 1656.8 L2430.1 1661.4 L2434.6 1654.6 L2444.5 1655.3 L2453.6 1655.3 L2460.4 1652.3 L2467.3 1657.6 L2473.3 1654.6 L2477.9 1655.3 L2481.7 1651.5 L2487.7 1659.1 L2496.1 1656.1 L2502.9 1652.3 L2511.2 1658.3 L2523.4 1653.8 L2531.7 1658.3 L2544.6 1653.8 L2556.7 1659.1 L2562.0 1656.8 L2566.6 1651.5 L2574.9 1654.6 L2581.7 1640.1 L2588.6 1649.2 L2597.7 1651.5 L2603.0 1637.9 L2609.8 1651.5 L2617.4 1656.1 L2621.2 1650.8 L2625.0 1640.9" fill="none" stroke="rgba(0,0,0,0.045)" stroke-width="2.5" stroke-linejoin="round"/>
<path d="M1104.6 1630.8 L1109.9 1645.9 L1114.5 1638.7 L1119.7 1636.7 L1126.3 1639.3 L1136.2 1640.0 L1140.8 1633.4 L1152.0 1635.4 L1157.2 1646.6 L1161.2 1640.7 L1167.1 1653.2 L1174.3 1657.8 L1182.9 1647.9 L1192.1 1650.5 L1200.0 1651.8 L1209.2 1647.2 L1215.8 1653.2 L1223.7 1645.3 L1230.9 1636.1 L1236.8 1646.6 L1246.1 1636.7 L1253.9 1644.6 L1263.8 1642.6 L1267.8 1634.7 L1278.9 1638.7 L1286.8 1634.7 L1298.7 1630.1 L1305.3 1638.0 L1309.9 1628.8 L1315.8 1628.8 L1323.7 1632.8 L1332.9 1626.8 L1336.8 1626.8 L1342.1 1632.8 L1346.7 1627.5 L1352.6 1630.8 L1357.2 1629.5 L1358.6 1632.1 L1362.8 1729.9 L1367.3 1764.5 L1374.8 1773.5 L1380.1 1769.0 L1383.8 1760.8 L1393.6 1760.0 L1399.6 1758.5 L1409.4 1762.3 L1414.7 1761.5 L1420.7 1755.5 L1426.7 1760.8 L1432.0 1761.5 L1441.7 1757.0 L1448.5 1764.5 L1457.5 1755.5 L1462.8 1743.5 L1468.8 1742.7 L1483.8 1729.9 L1494.4 1733.7 L1500.4 1731.4 L1505.6 1721.7 L1521.4 1719.4 L1526.7 1711.9 L1533.5 1717.1 L1538.0 1714.9 L1542.5 1706.6 L1551.5 1708.9 L1562.8 1699.1 L1580.1 1687.8 L1584.6 1676.5 L1591.4 1681.8 L1595.1 1680.3 L1601.1 1686.3 L1611.2 1677.0 L1617.9 1680.0 L1623.2 1678.5 L1627.7 1662.8 L1632.1 1659.0 L1643.3 1666.5 L1653.1 1639.6 L1659.0 1659.8 L1664.3 1661.3 L1674.7 1650.8 L1681.5 1656.8 L1691.2 1656.8 L1695.7 1647.8 L1702.4 1656.8 L1706.1 1655.3 L1712.1 1662.0 L1717.3 1656.8 L1727.1 1658.3 L1736.0 1644.8 L1748.0 1655.3 L1754.0 1648.6 L1760.7 1651.6 L1764.4 1650.1 L1771.2 1657.5 L1775.6 1654.6 L1780.1 1644.1 L1786.8 1656.1 L1790.6 1647.8 L1795.1 1646.3 L1801.0 1639.6 L1807.8 1647.8 L1816.0 1641.9 L1822.7 1633.6 L1828.7 1644.1 L1842.9 1637.4 L1849.6 1643.3 L1854.1 1639.6 L1860.8 1638.9 L1865.3 1631.4 L1871.3 1638.1 L1877.3 1632.1 L1885.5 1626.9 L1893.7 1635.1 L1907.2 1624.7 L1913.2 1628.4 L1922.9 1637.4 L1928.8 1636.6 L1937.8 1638.1 L1945.0 1633.6 L1949.0 1631.4 L1955.7 1637.4 L1960.2 1632.1 L1966.2 1633.6 L1970.6 1629.1 L1978.9 1632.9 L1986.3 1625.4 L1991.6 1626.2 L1999.0 1629.9 L2008.0 1626.9 L2017.7 1629.1 L2024.5 1635.9 L2029.7 1633.6 L2034.2 1629.9 L2040.9 1638.1 L2046.1 1632.1 L2050.6 1631.4 L2055.1 1627.7 L2064.1 1632.9 L2071.5 1627.7 L2076.8 1628.4 L2081.3 1632.9 L2088.0 1641.1 L2097.0 1638.1 L2103.7 1642.6 L2108.9 1638.1 L2114.9 1635.9 L2118.6 1628.4 L2125.4 1632.9 L2133.6 1630.6 L2143.3 1631.4 L2150.8 1632.1 L2155.2 1626.9 L2160.5 1624.7 L2167.2 1633.6 L2173.9 1629.9 L2181.4 1623.2 L2192.6 1640.4 L2203.1 1635.1 L2213.5 1635.9 L2219.5 1630.6 L2224.0 1631.4 L2230.7 1636.6 L2238.2 1636.6 L2244.9 1629.1 L2252.4 1636.6 L2261.4 1644.1 L2266.6 1644.8 L2271.8 1650.1 L2277.1 1636.6 L2282.3 1653.8 L2287.6 1650.0 L2293.6 1654.6 L2299.0 1659.9 L2303.5 1653.1 L2308.8 1653.1 L2314.9 1662.2 L2319.4 1657.6 L2325.5 1661.4 L2330.0 1653.8 L2336.1 1660.7 L2345.2 1657.6 L2357.3 1660.7 L2364.9 1657.6 L2371.8 1650.8 L2378.6 1660.7 L2389.2 1658.4 L2393.0 1655.4 L2401.3 1658.4 L2408.9 1657.6 L2415.0 1653.1 L2421.0 1653.1 L2426.3 1657.6 L2430.9 1650.8 L2440.8 1651.6 L2449.9 1651.6 L2456.7 1648.5 L2463.5 1653.8 L2469.6 1650.8 L2474.1 1651.6 L2477.9 1647.8 L2484.0 1655.4 L2492.3 1652.3 L2499.1 1648.5 L2507.5 1654.6 L2519.6 1650.0 L2528.0 1654.6 L2540.8 1650.0 L2553.0 1655.4 L2558.3 1653.1 L2562.8 1647.8 L2571.2 1650.8 L2578.0 1636.4 L2584.8 1645.5 L2593.9 1647.8 L2599.2 1634.1 L2606.1 1647.8 L2613.6 1652.3 L2617.4 1647.0 L2621.2 1637.2" fill="none" stroke="#f4ab3a" stroke-width="2.5" stroke-linejoin="round"/>
<line x1="1105.75" y1="1813.2" x2="2624" y2="1813.2" stroke="rgba(0,0,0,0.045)" stroke-width="2.5"/>
<line x1="1107.0" y1="1814.5" x2="2624" y2="1814.5" stroke="rgba(0,0,0,0.045)" stroke-width="2.5"/>
<line x1="1108.25" y1="1815.8" x2="2624" y2="1815.8" stroke="rgba(0,0,0,0.045)" stroke-width="2.5"/>
<line x1="1104.5" y1="1812.0" x2="2624" y2="1812.0" stroke="#ac7fa8" stroke-width="2.5"/>
<rect x="1129" y="1215" width="144" height="110" fill="rgba(255,255,255,0.75)" stroke="#d0d0d0" stroke-width="2"/>
<rect x="1131" y="1221.0" width="30" height="27" fill="none" stroke="#cccccc" stroke-width="1.5"/>
<rect x="1134" y="1224.0" width="24" height="20" fill="#6e9dc9"/>
<text x="1162.5" y="1240.0" font-size="25" fill="#333333">Maximum</text>
<rect x="1131" y="1256.7" width="30" height="27" fill="none" stroke="#cccccc" stroke-width="1.5"/>
<rect x="1134" y="1259.7" width="24" height="20" fill="#f4ab3a"/>
<text x="1162.5" y="1275.5" font-size="25" fill="#333333">Average</text>
<rect x="1131" y="1292.4" width="30" height="27" fill="none" stroke="#cccccc" stroke-width="1.5"/>
<rect x="1134" y="1295.4" width="24" height="20" fill="#ac7fa8"/>
<text x="1162.5" y="1311.0" font-size="25" fill="#333333">Minimum</text>
<text x="1084.5" y="1891.4" font-size="26" fill="#505050" text-anchor="end">-100.0</text>
<text x="1084.5" y="1821.5" font-size="26" fill="#505050" text-anchor="end">0</text>
<text x="1084.5" y="1753.8" font-size="26" fill="#505050" text-anchor="end">100.0</text>
<text x="1084.5" y="1683.9" font-size="26" fill="#505050" text-anchor="end">200.0</text>
<text x="1084.5" y="1616.2" font-size="26" fill="#505050" text-anchor="end">300.0</text>
<text x="1084.5" y="1546.1" font-size="26" fill="#505050" text-anchor="end">400.0</text>
<text x="1084.5" y="1476.0" font-size="26" fill="#505050" text-anchor="end">500.0</text>
<text x="1084.5" y="1408.3" font-size="26" fill="#505050" text-anchor="end">600.0</text>
<text x="1084.5" y="1338.4" font-size="26" fill="#505050" text-anchor="end">700.0</text>
<text x="1084.5" y="1270.0" font-size="26" fill="#505050" text-anchor="end">800.0</text>
<text x="1084.5" y="1200.1" font-size="26" fill="#505050" text-anchor="end">900.0</text>
<text x="1104.5" y="1926" font-size="25" fill="#505050" text-anchor="middle">Dec 11 00:00</text>
<text x="1358.6" y="1926" font-size="25" fill="#505050" text-anchor="middle">Dec 11 04:00</text>
<text x="1613.2" y="1926" font-size="25" fill="#505050" text-anchor="middle">Dec 11 08:00</text>
<text x="1866.8" y="1926" font-size="25" fill="#505050" text-anchor="middle">Dec 11 12:00</text>
<text x="2119.5" y="1926" font-size="25" fill="#505050" text-anchor="middle">Dec 11 16:00</text>
<text x="2373.0" y="1926" font-size="25" fill="#505050" text-anchor="middle">Dec 11 20:00</text>
<text x="2626.0" y="1926" font-size="25" fill="#505050" text-anchor="middle">Dec 12 00:00</text>
<text x="1340" y="1176" font-size="36" fill="#5f5555" letter-spacing="4.2">QUERIES PER SECOND (5 MINUTES AVERAGE)</text>
<path d="M510.5 88.5 L525.5 103.5 M525.5 88.5 L510.5 103.5" stroke="#e8eaed" stroke-width="2.6" stroke-linecap="round"/>
<path d="M594 84 V107 M582.5 95.5 H605.5" stroke="#ffffff" stroke-width="4"/>
<path d="M2856 91 L2866 101 L2876 91" fill="none" stroke="#ffffff" stroke-width="4"/>
<path d="M2933 82 L2949 98 M2949 82 L2933 98" stroke="#202124" stroke-width="5"/>
<path d="M111.5 170 H88 M98.3 157 L85.3 170 L98.3 183" fill="none" stroke="#e8eaed" stroke-width="3.4" stroke-linecap="round" stroke-linejoin="round"/>
<path d="M148 170 H171.5 M161.2 157 L174.2 170 L161.2 183" fill="none" stroke="#85868a" stroke-width="3.4" stroke-linecap="round" stroke-linejoin="round"/>
<path d="M237.7 174.6 A12.3 12.3 0 1 1 235.4 161.8" fill="none" stroke="#e8eaed" stroke-width="3.3" stroke-linecap="round"/><path d="M227.3 167.8 L240.4 155.6 V167.8 Z" fill="#e8eaed"/>
<rect x="298" y="168" width="17" height="13" rx="1.5" fill="#9aa0a6"/><path d="M301.5 168 V164 A5 5 0 0 1 311.5 164 V168" fill="none" stroke="#9aa0a6" stroke-width="2.6"/>
<path d="M2407.5 157.5 L2411.0 166.1 L2420.3 166.8 L2413.2 172.9 L2415.4 181.9 L2407.5 177.0 L2399.6 181.9 L2401.8 172.9 L2394.7 166.8 L2404.0 166.1Z" fill="none" stroke="#c4c7c5" stroke-width="2.6" stroke-linejoin="round"/>
<defs><linearGradient id="lens" x1="0" y1="0" x2="0" y2="1"><stop offset="0" stop-color="#2f5c66"/><stop offset="0.5" stop-color="#6fb3c4"/><stop offset="1" stop-color="#a9dbe6"/></linearGradient></defs><circle cx="2488" cy="170" r="14.2" fill="#e79f77"/><path d="M2474 168.5 A14.2 14.2 0 0 1 2502 168.5 L2500 170 Q2496 160 2490 162 Q2484 163 2481 167 L2476 171 Z" fill="#a9926a"/><circle cx="2479.6" cy="171.4" r="5.2" fill="url(#lens)" stroke="#e9eef0" stroke-width="2.2"/><circle cx="2496.4" cy="171.4" r="5.2" fill="url(#lens)" stroke="#e9eef0" stroke-width="2.2"/><path d="M2484.8 171 H2491.2" stroke="#e9eef0" stroke-width="2"/>
<path d="M2552 154.2 L2556.5 156.8 L2566 158.6 V170 Q2566 180.5 2552 185.8 Q2538 180.5 2538 170 V158.6 L2547.5 156.8 Z" fill="#800000"/><path d="M2545.2 164 V170.2 A3.2 3.2 0 0 0 2551.6 170.2 V164" fill="none" stroke="#f3e6e6" stroke-width="2.3"/><circle cx="2555.4" cy="169" r="3.9" fill="none" stroke="#f3e6e6" stroke-width="2.2"/><circle cx="2555.6" cy="169" r="1.3" fill="#f3e6e6"/>
<rect x="2602.5" y="160.2" width="22.5" height="23.5" rx="2.5" fill="#f1f3f4"/><circle cx="2613.8" cy="159" r="3.6" fill="#f1f3f4"/><circle cx="2627" cy="171.9" r="3.6" fill="#f1f3f4"/><circle cx="2602.3" cy="171.9" r="3.4" fill="#35363a"/><circle cx="2613.8" cy="184" r="3.4" fill="#35363a"/>
<rect x="2666" y="156" width="28" height="28" fill="#f1f3f4"/><rect x="2670" y="160.2" width="13.7" height="19.6" fill="#35363a"/>
<path d="M2736.4 165.4 L2739.2 156.6 Q2741.2 155.2 2743.8 157.2 Q2746.4 155.2 2748.4 156.6 L2751.4 165.4 Z" fill="#202124"/><rect x="2730.2" y="167.8" width="27.6" height="2.2" rx="1.1" fill="#3a3b3f"/><rect x="2733.1" y="173.3" width="7.6" height="7.4" rx="2.8" fill="none" stroke="#3a3b3f" stroke-width="2"/><rect x="2747.5" y="173.3" width="7.6" height="7.4" rx="2.8" fill="none" stroke="#3a3b3f" stroke-width="2"/><path d="M2740.7 176.6 H2747.5" stroke="#3a3b3f" stroke-width="1.6"/>
<circle cx="2943" cy="160" r="3.3" fill="#e8eaed"/><circle cx="2943" cy="171" r="3.3" fill="#e8eaed"/><circle cx="2943" cy="182" r="3.3" fill="#e8eaed"/>
<path d="M2964 232 L2971 224 L2978 232 Z" fill="#a3a3a3"/><path d="M2964 2021 L2971 2029 L2978 2021 Z" fill="#a3a3a3"/>
<path d="M516.2 260 H532.2 L524.2 268 Z" fill="#e6e6e6"/>
<path d="M759.7 260 H775.7 L767.7 268 Z" fill="#e6e6e6"/>
<path d="M961.6 260 H977.6 L969.6 268 Z" fill="#e6e6e6"/>
<path d="M1202.1 260 H1218.1 L1210.1 268 Z" fill="#e6e6e6"/>
<path d="M1426.4 260 H1442.4 L1434.4 268 Z" fill="#e6e6e6"/>
<path d="M1629.1 260 H1645.1 L1637.1 268 Z" fill="#e6e6e6"/>
<path d="M1790.2 260 H1806.2 L1798.2 268 Z" fill="#e6e6e6"/>
<path d="M1976.0 260 H1992.0 L1984.0 268 Z" fill="#e6e6e6"/>
<path d="M2108.7 260 H2124.7 L2116.7 268 Z" fill="#e6e6e6"/>
<path d="M2282.6 260 H2298.6 L2290.6 268 Z" fill="#e6e6e6"/>
<path d="M2509.0 260 H2525.0 L2517.0 268 Z" fill="#e6e6e6"/>
<circle cx="2600" cy="262" r="16" fill="#f2f2f2"/><circle cx="2600.5" cy="253.5" r="3" fill="#5f5654"/><path d="M2594.5 258 H2603 V269 H2606 V273 H2594.5 V269 H2597.5 V262 H2594.5 Z" fill="#5f5654"/>
<g transform="translate(93 246)"><path d="M41.4 1.0 L82.0 22.5 L82.0 66.5 L41.4 89.5 L0.5 66.5 L0.5 22.5 Z" fill="#000" stroke="#000" stroke-width="3" stroke-linejoin="round"/><path d="M4.5 49.5 Q14.0 60.0 27.5 71.0 L26.5 75.5 Q12.0 68.0 5.5 61.0 Z" fill="#fff"/><path d="M78.3 49.5 Q68.8 60.0 55.3 71.0 L56.3 75.5 Q70.8 68.0 77.3 61.0 Z" fill="#fff"/><path d="M41.4 5.0 Q47.0 9.0 54.5 12.0 Q49.0 13.5 47.5 16.5 Q56.5 20.0 55.8 26.0 Q53.0 39.0 46.5 52.0 L48.5 66.0 L34.3 66.0 L36.3 52.0 Q29.8 39.0 27.0 26.0 Q26.3 20.0 35.3 16.5 Q33.8 13.5 28.3 12.0 Q35.8 9.0 41.4 5.0 Z" fill="#fff"/><circle cx="41.400000000000006" cy="75.5" r="13" fill="#fff"/><ellipse cx="41.400000000000006" cy="74.5" rx="9.5" ry="4" fill="#000"/><ellipse cx="20" cy="47.5" rx="7.4" ry="5.2" fill="#c4c4c4"/><ellipse cx="20.5" cy="47.5" rx="1.6" ry="4.2" fill="#333"/><ellipse cx="62.80000000000001" cy="47.5" rx="7.4" ry="5.2" fill="#c4c4c4"/><ellipse cx="62.30000000000001" cy="47.5" rx="1.6" ry="4.2" fill="#333"/></g>
<g transform="translate(96.2 81.5) scale(0.33)"><path d="M41.4 1.0 L82.0 22.5 L82.0 66.5 L41.4 89.5 L0.5 66.5 L0.5 22.5 Z" fill="#000" stroke="#000" stroke-width="3" stroke-linejoin="round"/><path d="M4.5 49.5 Q14.0 60.0 27.5 71.0 L26.5 75.5 Q12.0 68.0 5.5 61.0 Z" fill="#fff"/><path d="M78.3 49.5 Q68.8 60.0 55.3 71.0 L56.3 75.5 Q70.8 68.0 77.3 61.0 Z" fill="#fff"/><path d="M41.4 5.0 Q47.0 9.0 54.5 12.0 Q49.0 13.5 47.5 16.5 Q56.5 20.0 55.8 26.0 Q53.0 39.0 46.5 52.0 L48.5 66.0 L34.3 66.0 L36.3 52.0 Q29.8 39.0 27.0 26.0 Q26.3 20.0 35.3 16.5 Q33.8 13.5 28.3 12.0 Q35.8 9.0 41.4 5.0 Z" fill="#fff"/><circle cx="41.400000000000006" cy="75.5" r="13" fill="#fff"/><ellipse cx="41.400000000000006" cy="74.5" rx="9.5" ry="4" fill="#000"/><ellipse cx="20" cy="47.5" rx="7.4" ry="5.2" fill="#c4c4c4"/><ellipse cx="20.5" cy="47.5" rx="1.6" ry="4.2" fill="#333"/><ellipse cx="62.80000000000001" cy="47.5" rx="7.4" ry="5.2" fill="#c4c4c4"/><ellipse cx="62.30000000000001" cy="47.5" rx="1.6" ry="4.2" fill="#333"/></g>
<path d="M447 399.7 C456 388.5 465 384 473.2 384 C481.4 384 490.4 388.5 499.4 399.7 C490.4 411 481.4 415.4 473.2 415.4 C465 415.4 456 411 447 399.7 Z" fill="none" stroke="#5f5555" stroke-width="4" stroke-linejoin="round"/><circle cx="472.8" cy="397.3" r="13" fill="#5f5555"/><path d="M474.5 387.2 Q466.5 388 465 396.5" fill="none" stroke="#d1d7dc" stroke-width="2.6" stroke-linecap="round"/>
<path d="M448 569.5 A23 23 0 1 1 487 569.5 Z" fill="#5f5555"/>
<circle cx="456.1" cy="545.1" r="2.9" fill="#fff"/>
<circle cx="467.3" cy="540.4" r="2.9" fill="#fff"/>
<circle cx="478.4" cy="545.1" r="2.9" fill="#fff"/>
<circle cx="451.4" cy="556.3" r="2.9" fill="#fff"/>
<circle cx="483.3" cy="556.3" r="2.9" fill="#fff"/>
<circle cx="467.3" cy="561.5" r="4.8" fill="#fff"/><path d="M467.5 560 L471.2 546.5" stroke="#fff" stroke-width="2.4" stroke-linecap="round"/>
<path d="M458.3 1076.5 H465.4 L463.5 1107.2 H446.5 Z M472 1076.5 H478.9 L491.6 1107.2 H474.3 Z M465 1083.2 H472.3 V1085.5 H465 Z M464.2 1096 H473.5 V1099.3 H464.2 Z" fill="#5f5555"/>
<circle cx="487" cy="638" r="11.7" fill="#555555"/><path d="M483.4 634.8 Q484.2 631.7 487.3 631.7 Q490.9 631.7 490.9 634.5 Q490.9 636.4 488.8 637.6 Q487.1 638.5 487.1 640.3" fill="none" stroke="#fff" stroke-width="3" stroke-linecap="round"/><circle cx="486.9" cy="644.1" r="1.8" fill="#fff"/>
<circle cx="684.7" cy="638" r="10.3" fill="none" stroke="#337ab7" stroke-width="2.8"/><path d="M685.5 631.5 V639 H679.5" fill="none" stroke="#337ab7" stroke-width="2.2"/>
<path d="M904 631.8 H896.5 A4.1 4.1 0 0 0 896.5 640 H904 Z" fill="#337ab7"/><path d="M903 633 L916.6 627.2 V645 L903 639" fill="none" stroke="#337ab7" stroke-width="2.4" stroke-linejoin="round"/><circle cx="918.5" cy="636" r="1.9" fill="#337ab7"/><path d="M895.3 639.5 L898.2 649.6 H903.8 L902.2 639.5 Z" fill="#337ab7"/>
<path d="M1098.64 634.97 L1098.98 636.00 L1101.61 635.85 L1101.61 639.75 L1098.98 639.60 L1098.64 640.63 L1098.15 641.60 L1100.11 643.36 L1097.36 646.11 L1095.60 644.15 L1094.63 644.64 L1093.60 644.98 L1093.75 647.61 L1089.85 647.61 L1090.00 644.98 L1088.97 644.64 L1088.00 644.15 L1086.24 646.11 L1083.49 643.36 L1085.45 641.60 L1084.96 640.63 L1084.62 639.60 L1081.99 639.75 L1081.99 635.85 L1084.62 636.00 L1084.96 634.97 L1085.45 634.00 L1083.49 632.24 L1086.24 629.49 L1088.00 631.45 L1088.97 630.96 L1090.00 630.62 L1089.85 627.99 L1093.75 627.99 L1093.60 630.62 L1094.63 630.96 L1095.60 631.45 L1097.36 629.49 L1100.11 632.24 L1098.15 634.00Z M1095.3 637.8 A3.5 3.5 0 1 0 1088.3 637.8 A3.5 3.5 0 1 0 1095.3 637.8Z" fill="#337ab7" fill-rule="evenodd"/>
<path d="M1109.72 627.65 L1110.07 628.42 L1111.70 628.27 L1111.70 631.33 L1110.07 631.18 L1109.72 631.95 L1109.23 632.64 L1110.17 633.97 L1107.53 635.50 L1106.84 634.02 L1106.00 634.10 L1105.16 634.02 L1104.47 635.50 L1101.83 633.97 L1102.77 632.64 L1102.28 631.95 L1101.93 631.18 L1100.30 631.33 L1100.30 628.27 L1101.93 628.42 L1102.28 627.65 L1102.77 626.96 L1101.83 625.63 L1104.47 624.10 L1105.16 625.58 L1106.00 625.50 L1106.84 625.58 L1107.53 624.10 L1110.17 625.63 L1109.23 626.96Z M1107.9 629.8 A1.9 1.9 0 1 0 1104.1 629.8 A1.9 1.9 0 1 0 1107.9 629.8Z" fill="#337ab7" fill-rule="evenodd"/>
<path d="M1109.72 643.85 L1110.07 644.62 L1111.70 644.47 L1111.70 647.53 L1110.07 647.38 L1109.72 648.15 L1109.23 648.84 L1110.17 650.17 L1107.53 651.70 L1106.84 650.22 L1106.00 650.30 L1105.16 650.22 L1104.47 651.70 L1101.83 650.17 L1102.77 648.84 L1102.28 648.15 L1101.93 647.38 L1100.30 647.53 L1100.30 644.47 L1101.93 644.62 L1102.28 643.85 L1102.77 643.16 L1101.83 641.83 L1104.47 640.30 L1105.16 641.78 L1106.00 641.70 L1106.84 641.78 L1107.53 640.30 L1110.17 641.83 L1109.23 643.16Z M1107.9 646 A1.9 1.9 0 1 0 1104.1 646 A1.9 1.9 0 1 0 1107.9 646Z" fill="#337ab7" fill-rule="evenodd"/>
<path d="M1302 627.5 Q1302 626 1303.5 626 H1311.8 V637 H1322 V648.5 Q1322 650 1320.5 650 H1303.5 Q1302 650 1302 648.5 Z M1314.2 626.6 L1322 634.6 H1314.2 Z" fill="#337ab7"/>
<path d="M1604.5 630.5 A9.6 9.6 0 1 1 1594.9 630.5" fill="none" stroke="#337ab7" stroke-width="3.2" stroke-linecap="round"/><path d="M1599.7 626 V637" stroke="#337ab7" stroke-width="3.2" stroke-linecap="round"/>
<rect x="1801.4" y="626.2" width="23.1" height="23.7" rx="3.5" fill="#337ab7"/><path d="M1806.5 644.5 L1816.5 634.5" stroke="#fff" stroke-width="2.6"/><path d="M1811 631 H1820.5 V640.5 Z" fill="#fff"/>
<path d="M2880 1992 L2885.5 1984 L2891 1992" fill="none" stroke="#333" stroke-width="3"/>
</svg>
</div></div>
</body></html>
